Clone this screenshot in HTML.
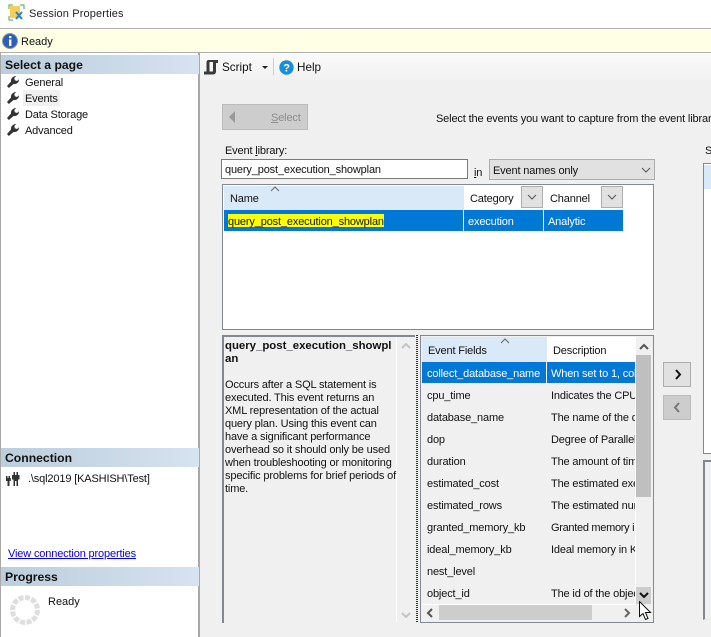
<!DOCTYPE html>
<html><head><meta charset="utf-8">
<style>
html,body{margin:0;padding:0}
body{width:711px;height:637px;position:relative;overflow:hidden;background:#f0f0f0;font-family:"Liberation Sans",sans-serif;font-size:11px;letter-spacing:-.15px;color:#111}
.a{position:absolute}
.t{position:absolute;white-space:nowrap;line-height:14px;margin-top:1px}
.hd{position:absolute;left:1px;width:198px;height:19px;background:linear-gradient(90deg,#bccddc,#d6e3f0);font-weight:bold;font-size:12.2px;letter-spacing:0;line-height:20px;text-indent:4px;color:#111}
.c{position:absolute;overflow:hidden;white-space:nowrap;line-height:14px;height:14px;margin-top:1px}
u{text-decoration:underline}
</style></head><body>
<!-- title -->
<div class="a" style="left:0;top:0;width:711px;height:28px;background:#fff"></div>
<svg class="a" style="left:8px;top:4px" width="17" height="17" viewBox="0 0 17 17"><rect x="2" y="2" width="10" height="12" fill="#f6cf5a"/><path d="M1 5V1h4M12 1h4v4M1 12v4h4" fill="none" stroke="#4aa84a" stroke-width="1"/><path d="M8 8l6 7M14 8l-6 7" stroke="#2a7fd0" stroke-width="2"/></svg>
<div class="t" style="left:29px;top:6px;color:#222;letter-spacing:.13px">Session Properties</div>
<!-- ready bar -->
<div class="a" style="left:0;top:28px;width:711px;height:25px;background:#ffffe6;border-top:1px solid #b0b0b0;border-bottom:1px solid #b0b0b0;box-sizing:border-box"></div>
<svg class="a" style="left:2px;top:33px" width="16" height="16" viewBox="0 0 16 16"><circle cx="8" cy="8" r="7.5" fill="#2b5fb8" stroke="#8a98a8"/><rect x="7" y="3" width="2.4" height="2.2" fill="#fff"/><rect x="7" y="6.5" width="2.4" height="6.5" fill="#fff"/></svg>
<div class="t" style="left:21px;top:34px;letter-spacing:0">Ready</div>
<!-- left panel -->
<div class="a" style="left:0;top:53px;width:200px;height:584px;background:#fff;border-right:2px solid #a8a8a8;border-left:1px solid #a8a8a8;box-sizing:border-box"></div>
<div class="hd" style="top:55px">Select a page</div>
<div class="a" style="left:23px;top:90px;width:37px;height:16px;background:#f0f0f0"></div>
<svg width="0" height="0" style="position:absolute"><defs><symbol id="w" viewBox="0 0 12 12"><path d="M0 10l1.800 2L6.500 8C9.500 8.500 12 6.500 12 3.200L10 5 7.800 4.200 7.300 2 9.300 0C6 0 3.500 2.500 4 5.500z" fill="#333"/></symbol></defs></svg>
<svg class="a" style="left:7px;top:76px" width="12" height="12"><use href="#w"/></svg>
<svg class="a" style="left:7px;top:92px" width="12" height="12"><use href="#w"/></svg>
<svg class="a" style="left:7px;top:108px" width="12" height="12"><use href="#w"/></svg>
<svg class="a" style="left:7px;top:124px" width="12" height="12"><use href="#w"/></svg>
<div class="t" style="left:25px;top:75px">General</div>
<div class="t" style="left:25px;top:91px">Events</div>
<div class="t" style="left:25px;top:107px">Data Storage</div>
<div class="t" style="left:25px;top:123px">Advanced</div>
<div class="hd" style="top:448px">Connection</div>
<svg class="a" style="left:6px;top:472px" width="14" height="14" viewBox="0 0 14 14"><path d="M0 4h1.500v2h1V4H4v2h.8v3H3.500v5h-2V9H0zM7.500 0h1.500v3h1.500V0H12v3h1.500v4.500H12V14h-1.500V9H9v5H7.500V7.500H6V3h1.500z" fill="#333"/></svg>
<div class="t" style="left:28px;top:471px">.\sql2019 [KASHISH\Test]</div>
<div class="t" style="left:8px;top:546px;color:#0000ee;text-decoration:underline">View connection properties</div>
<div class="hd" style="top:567px">Progress</div>
<svg class="a" style="left:9px;top:594px" width="32" height="32" viewBox="0 0 32 32"><circle cx="16" cy="16" r="12.500" fill="none" stroke="#dedede" stroke-width="5" stroke-dasharray="5 1.500"/></svg>
<div class="t" style="left:48px;top:594px;letter-spacing:0">Ready</div>
<!-- toolbar -->
<div class="a" style="left:200px;top:53px;width:511px;height:30px;background:linear-gradient(#fafafa,#f0f0f0)"></div>
<svg class="a" style="left:204px;top:60px" width="14" height="15" viewBox="0 0 14 15"><path d="M4.500 0H14v3h-2v8.500c0 1.500-1 3-3 3H0v-3h2.500V2c0-1 1-2 2-2zM5.500 2v9.500H9V2z" fill="#3a3a3a"/></svg>
<div class="t" style="left:222px;top:60px;font-size:11.7px;letter-spacing:0">Script</div>
<div class="a" style="left:262px;top:66px;border:3px solid transparent;border-top:3px solid #222"></div>
<div class="a" style="left:273px;top:58px;width:1px;height:17px;background:#ccc"></div>
<svg class="a" style="left:279px;top:60px" width="15" height="15" viewBox="0 0 15 15"><circle cx="7.500" cy="7.500" r="7.200" fill="#1b8ed8"/><text x="7.500" y="11.500" font-family="Liberation Sans" font-size="11" font-weight="bold" fill="#fff" text-anchor="middle">?</text></svg>
<div class="t" style="left:297px;top:60px;font-size:11.7px;letter-spacing:0">Help</div>
<!-- select btn -->
<div class="a" style="left:222px;top:104px;width:86px;height:26px;background:#cdcdcd;border:1px solid #bbb;box-sizing:border-box"></div>
<div class="a" style="left:229px;top:111px;border:6px solid transparent;border-left:0;border-right:6px solid #999"></div>
<div class="t" style="left:271px;top:110px;color:#8c8c8c"><u>S</u>elect</div>
<div class="t" style="left:436px;top:111px;width:275px;overflow:hidden">Select the events you want to capture from the event library:</div>
<div class="t" style="left:225px;top:143px"><span>Event <u>l</u>ibrary:</span></div>
<div class="a" style="left:221px;top:159px;width:247px;height:20px;background:#fff;border:1px solid #7a7a7a;box-sizing:border-box"></div>
<div class="t" style="left:225px;top:162px">query_post_execution_showplan</div>
<div class="t" style="left:474px;top:165px"><u>i</u>n</div>
<div class="a" style="left:489px;top:159px;width:166px;height:21px;background:#e1e1e1;border:1px solid #adadad;box-sizing:border-box"></div>
<div class="t" style="left:493px;top:163px">Event names only</div>
<svg class="a" style="left:641px;top:167px" width="10" height="6"><path d="M1 1l4 4 4-4" fill="none" stroke="#555"/></svg>
<!-- top grid -->
<div class="a" style="left:222px;top:184px;width:432px;height:146px;background:#fff;border:1px solid #828790;box-sizing:border-box"></div>
<div class="a" style="left:224px;top:186px;width:240px;height:24px;background:#d9e9f8"></div>
<svg class="a" style="left:270px;top:186px" width="10" height="6"><path d="M1 5l4-4 4 4" fill="none" stroke="#666"/></svg>
<div class="t" style="left:230px;top:191px">Name</div>
<div class="t" style="left:470px;top:191px">Category</div>
<div class="t" style="left:550px;top:191px">Channel</div>
<div class="a" style="left:521px;top:186px;width:22px;height:22px;background:#e1e1e1;border:1px solid #adadad;box-sizing:border-box"></div>
<div class="a" style="left:601px;top:186px;width:22px;height:22px;background:#e1e1e1;border:1px solid #adadad;box-sizing:border-box"></div>
<svg class="a" style="left:527px;top:194px" width="10" height="6"><path d="M1 1l4 4 4-4" fill="none" stroke="#555"/></svg>
<svg class="a" style="left:607px;top:194px" width="10" height="6"><path d="M1 1l4 4 4-4" fill="none" stroke="#555"/></svg>
<div class="a" style="left:224px;top:210px;width:399px;height:21px;background:#0078d7"></div>
<div class="a" style="left:463px;top:210px;width:1px;height:21px;background:#fff"></div>
<div class="a" style="left:543px;top:210px;width:1px;height:21px;background:#fff"></div>
<div class="a" style="left:228px;top:214px;width:156px;height:13px;background:#ffff00"></div>
<div class="t" style="left:228px;top:214px;color:#111">query_post_execution_showplan</div>
<div class="t" style="left:468px;top:214px;color:#fff">execution</div>
<div class="t" style="left:548px;top:214px;color:#fff">Analytic</div>
<!-- description -->
<div class="a" style="left:222px;top:335px;width:193px;height:288px;border:1px solid #828790;border-width:2px 0 0 2px;box-sizing:border-box"></div>
<div class="a" style="left:396px;top:337px;width:1px;height:285px;background:#fff"></div>
<svg class="a" style="left:401px;top:343px" width="10" height="6"><path d="M1 5l4-4 4 4" fill="none" stroke="#c4c4c4" stroke-width="2"/></svg>
<svg class="a" style="left:401px;top:612px" width="10" height="6"><path d="M1 1l4 4 4-4" fill="none" stroke="#c4c4c4" stroke-width="2"/></svg>
<div class="t" style="left:225px;top:339px;font-weight:bold;font-size:11.4px;letter-spacing:0;line-height:13px">query_post_execution_showpl<br>an</div>
<div class="t" style="left:225px;top:378px;line-height:13px;">Occurs after a SQL statement is<br>executed. This event returns an<br>XML representation of the actual<br>query plan. Using this event can<br>have a significant performance<br>overhead so it should only be used<br>when troubleshooting or monitoring<br>specific problems for brief periods of<br>time.</div>
<!-- splitter -->
<div class="a" style="left:416px;top:335px;width:2px;height:288px;background:repeating-linear-gradient(#333 0 1px,#eee 1px 2px)"></div>
<!-- fields grid -->
<div class="a" style="left:420px;top:335px;width:234px;height:288px;border:1px solid #828790;box-sizing:border-box"></div>
<div class="a" style="left:422px;top:337px;width:125px;height:25px;background:#d9e9f8"></div>
<div class="a" style="left:547px;top:337px;width:88px;height:25px;background:#fff"></div>
<svg class="a" style="left:500px;top:338px" width="10" height="6"><path d="M1 5l4-4 4 4" fill="none" stroke="#666"/></svg>
<div class="t" style="left:428px;top:343px">Event Fields</div>
<div class="t" style="left:553px;top:343px">Description</div>
<div class="a" style="left:422px;top:362px;width:213px;height:21px;background:#0078d7"></div>
<div class="a" style="left:546px;top:362px;width:1px;height:21px;background:#fff"></div>
<div class="a" style="left:635px;top:337px;width:1px;height:267px;background:#fff"></div>
<div class="c" style="left:427px;top:366px;width:118px;color:#fff">collect_database_name</div>
<div class="c" style="left:551px;top:366px;width:84px;color:#fff">When set to 1, collect</div>
<div class="c" style="left:427px;top:388px;width:118px">cpu_time</div><div class="c" style="left:551px;top:388px;width:84px">Indicates the CPU time</div>
<div class="c" style="left:427px;top:410px;width:118px">database_name</div><div class="c" style="left:551px;top:410px;width:84px">The name of the database</div>
<div class="c" style="left:427px;top:432px;width:118px">dop</div><div class="c" style="left:551px;top:432px;width:84px">Degree of Parallelism</div>
<div class="c" style="left:427px;top:454px;width:118px">duration</div><div class="c" style="left:551px;top:454px;width:84px">The amount of time</div>
<div class="c" style="left:427px;top:476px;width:118px">estimated_cost</div><div class="c" style="left:551px;top:476px;width:84px">The estimated execution</div>
<div class="c" style="left:427px;top:498px;width:118px">estimated_rows</div><div class="c" style="left:551px;top:498px;width:84px">The estimated number</div>
<div class="c" style="left:427px;top:520px;width:118px">granted_memory_kb</div><div class="c" style="left:551px;top:520px;width:84px;letter-spacing:-.3px">Granted memory in KB</div>
<div class="c" style="left:427px;top:542px;width:118px">ideal_memory_kb</div><div class="c" style="left:551px;top:542px;width:84px">Ideal memory in KB</div>
<div class="c" style="left:427px;top:564px;width:118px">nest_level</div>
<div class="c" style="left:427px;top:586px;width:118px">object_id</div><div class="c" style="left:551px;top:586px;width:84px">The id of the object</div>
<!-- vscroll -->
<div class="a" style="left:636px;top:355px;width:15px;height:142px;background:#bfbfbf"></div>
<svg class="a" style="left:639px;top:343px" width="10" height="7"><path d="M1 6l4-4 4 4" fill="none" stroke="#555" stroke-width="2"/></svg>
<div class="a" style="left:636px;top:587px;width:15px;height:17px;background:#cdcdcd"></div>
<svg class="a" style="left:639px;top:592px" width="10" height="7"><path d="M1 1l4 4 4-4" fill="none" stroke="#111" stroke-width="2"/></svg>
<!-- hscroll -->
<div class="a" style="left:422px;top:604px;width:213px;height:1px;background:#fff"></div>
<div class="a" style="left:439px;top:605px;width:153px;height:15px;background:#cdcdcd"></div>
<svg class="a" style="left:426px;top:608px" width="8" height="10"><path d="M6 1L2 5l4 4" fill="none" stroke="#555" stroke-width="2"/></svg>
<svg class="a" style="left:623px;top:608px" width="8" height="10"><path d="M2 1l4 4-4 4" fill="none" stroke="#666" stroke-width="2"/></svg>
<!-- cursor -->
<svg class="a" style="left:639px;top:601px" width="13" height="20" viewBox="0 0 13 20"><path d="M.5.500v15l3.500-3 2.500 6 2.500-1-2.500-6h5z" fill="#fff" stroke="#111"/></svg>
<!-- arrows -->
<div class="a" style="left:663px;top:362px;width:28px;height:25px;background:#e1e1e1;border:1px solid #adadad;box-sizing:border-box"></div>
<svg class="a" style="left:674px;top:369px" width="8" height="11"><path d="M2 1l4 4.500L2 10" fill="none" stroke="#111" stroke-width="2"/></svg>
<div class="a" style="left:663px;top:395px;width:28px;height:25px;background:#cdcdcd;border:1px solid #bbb;box-sizing:border-box"></div>
<svg class="a" style="left:673px;top:402px" width="8" height="11"><path d="M6 1L2 5.500 6 10" fill="none" stroke="#777" stroke-width="2"/></svg>
<!-- right side -->
<div class="t" style="left:705px;top:143px">S</div>
<div class="a" style="left:703px;top:163px;width:8px;height:291px;background:#fff;border:1px solid #828790;border-right:0;box-sizing:border-box"></div>
<div class="a" style="left:704px;top:165px;width:7px;height:24px;background:#d9e9f8"></div>
<div class="a" style="left:703px;top:460px;width:8px;height:160px;border-left:2px solid #828790;border-top:2px solid #828790;border-bottom:1px solid #e8e8e8;box-sizing:border-box"></div>
</body></html>
